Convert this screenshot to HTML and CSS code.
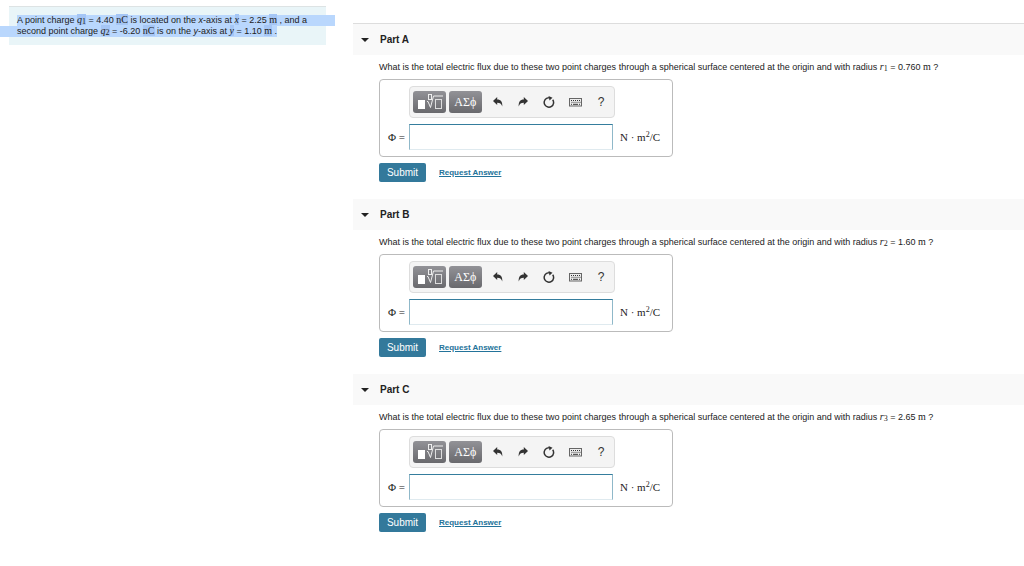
FILE: index.html
```
<!DOCTYPE html>
<html lang="en">
<head>
<meta charset="utf-8">
<title>Electric flux</title>
<link rel="stylesheet" href="styles.css">
</head>
<body>
<svg class="sprite" aria-hidden="true">
  <symbol id="template" viewBox="0 0 27 18">
    <rect x="2" y="7" width="7" height="9" fill="#fff"/>
    <rect x="12.500" y="1.500" width="3" height="5" fill="none" stroke="#eee"/>
    <path d="M11 8.500h1l2.500 6 3-11.500H27" fill="none" stroke="#eee"/>
    <rect x="19.500" y="6.500" width="6" height="9" fill="none" stroke="#ddd"/>
  </symbol>
  <symbol id="undo" viewBox="0 0 10 10"><path d="M0 4l4.200-4v2.400C8 2.400 9.500 4.500 9.300 9.500 8.300 6.800 7 5.800 4.200 5.800V8z" fill="#333"/></symbol>
  <symbol id="redo" viewBox="0 0 10 10"><path d="M10 4L5.800 0v2.400C2 2.400.5 4.500.7 9.500 1.700 6.800 3 5.800 5.800 5.800V8z" fill="#333"/></symbol>
  <symbol id="reset" viewBox="0 0 12 12"><path d="M9.700 3.700A4.700 4.700 0 1 1 3.500 2.400L6 1.600" fill="none" stroke="#333" stroke-width="1.500"/><path d="M5.500 0l4 1.700-3 2.800z" fill="#333"/></symbol>
  <symbol id="keyboard" viewBox="0 0 13 9"><rect x=".5" y=".5" width="12" height="7.500" fill="#eee" stroke="#666"/><path d="M2 2.500h9M2.500 4.300h9" stroke="#333" stroke-dasharray="1 1"/><path d="M2 6.300h1M4 6.300h5M10 6.300h1" stroke="#333"/></symbol>
</svg>
<div class="page">
  <aside class="side">
    <div class="statement">
      <div class="line line-first">A point charge <span class="math"><i>q</i><sub>1</sub></span> = 4.40 <span class="math">nC</span> is located on the <i>x</i>-axis at <span class="math"><i>x</i></span> = 2.25 <span class="math">m</span> , and a</div>
      <div class="line line-last">second point charge <span class="math"><i>q</i><sub>2</sub></span> = -6.20 <span class="math">nC</span> is on the <i>y</i>-axis at <span class="math"><i>y</i></span> = 1.10 <span class="math">m</span> .</div>
    </div>
  </aside>
  <main class="parts">
    <section class="part">
      <h2 class="part-head"><span class="caret"></span>Part A</h2>
      <form class="part-body">
        <p class="question">What is the total electric flux due to these two point charges through a spherical surface centered at the origin and with radius <span class="math"><i>r</i><sub>1</sub></span> = 0.760 <span class="math">m</span> ?</p>
        <div class="answer">
          <div class="toolbar">
            <button type="button" class="key" aria-label="Templates"><svg class="tpl"><use href="#template"/></svg></button>
            <button type="button" class="key">ΑΣϕ</button>
            <button type="button" class="tool" aria-label="Undo"><svg class="arrow"><use href="#undo"/></svg></button>
            <button type="button" class="tool" aria-label="Redo"><svg class="arrow"><use href="#redo"/></svg></button>
            <button type="button" class="tool" aria-label="Reset"><svg class="reset"><use href="#reset"/></svg></button>
            <button type="button" class="tool" aria-label="Keyboard"><svg class="kbd"><use href="#keyboard"/></svg></button>
            <button type="button" class="tool">?</button>
          </div>
          <label class="symbol" for="flux-a">Φ =</label>
          <input class="field" id="flux-a" type="text">
          <span class="unit">N · m<sup>2</sup>/C</span>
        </div>
        <div class="actions"><button type="button" class="submit">Submit</button><a class="request" href="#">Request Answer</a></div>
      </form>
    </section>
    <section class="part">
      <h2 class="part-head"><span class="caret"></span>Part B</h2>
      <form class="part-body">
        <p class="question">What is the total electric flux due to these two point charges through a spherical surface centered at the origin and with radius <span class="math"><i>r</i><sub>2</sub></span> = 1.60 <span class="math">m</span> ?</p>
        <div class="answer">
          <div class="toolbar">
            <button type="button" class="key" aria-label="Templates"><svg class="tpl"><use href="#template"/></svg></button>
            <button type="button" class="key">ΑΣϕ</button>
            <button type="button" class="tool" aria-label="Undo"><svg class="arrow"><use href="#undo"/></svg></button>
            <button type="button" class="tool" aria-label="Redo"><svg class="arrow"><use href="#redo"/></svg></button>
            <button type="button" class="tool" aria-label="Reset"><svg class="reset"><use href="#reset"/></svg></button>
            <button type="button" class="tool" aria-label="Keyboard"><svg class="kbd"><use href="#keyboard"/></svg></button>
            <button type="button" class="tool">?</button>
          </div>
          <label class="symbol" for="flux-b">Φ =</label>
          <input class="field" id="flux-b" type="text">
          <span class="unit">N · m<sup>2</sup>/C</span>
        </div>
        <div class="actions"><button type="button" class="submit">Submit</button><a class="request" href="#">Request Answer</a></div>
      </form>
    </section>
    <section class="part">
      <h2 class="part-head"><span class="caret"></span>Part C</h2>
      <form class="part-body">
        <p class="question">What is the total electric flux due to these two point charges through a spherical surface centered at the origin and with radius <span class="math"><i>r</i><sub>3</sub></span> = 2.65 <span class="math">m</span> ?</p>
        <div class="answer">
          <div class="toolbar">
            <button type="button" class="key" aria-label="Templates"><svg class="tpl"><use href="#template"/></svg></button>
            <button type="button" class="key">ΑΣϕ</button>
            <button type="button" class="tool" aria-label="Undo"><svg class="arrow"><use href="#undo"/></svg></button>
            <button type="button" class="tool" aria-label="Redo"><svg class="arrow"><use href="#redo"/></svg></button>
            <button type="button" class="tool" aria-label="Reset"><svg class="reset"><use href="#reset"/></svg></button>
            <button type="button" class="tool" aria-label="Keyboard"><svg class="kbd"><use href="#keyboard"/></svg></button>
            <button type="button" class="tool">?</button>
          </div>
          <label class="symbol" for="flux-c">Φ =</label>
          <input class="field" id="flux-c" type="text">
          <span class="unit">N · m<sup>2</sup>/C</span>
        </div>
        <div class="actions"><button type="button" class="submit">Submit</button><a class="request" href="#">Request Answer</a></div>
      </form>
    </section>
  </main>
</div>
</body>
</html>
```
FILE: styles.css
```
* { box-sizing: border-box; }
body {
  margin: 0;
  background: #fff;
  color: #222;
  font: 9px/12px "Liberation Sans", Arial, sans-serif;
}
.sprite { display: none; }
.page {
  display: grid;
  grid-template-columns: 335px minmax(0, 1fr);
  column-gap: 18px;
}
.side { padding: 6px 9px 0; }
.statement {
  padding: 8px 0 8px 8px;
  border-top: 1px solid #dde3e4;
  background: #e9f5f8;
}
.line { height: 11px; line-height: 10px; background: #b9d7fd; white-space: nowrap; }
.line-first { margin-right: -9px; }
.line-last { width: fit-content; margin-left: -17px; padding-left: 17px; }
.math {
  font-family: "Liberation Serif", "Times New Roman", serif;
  font-size: 10px;
  line-height: 1;
}
.line .math { background: #a5c6f5; }
sub, sup { font-size: 8px; line-height: 0; }
sub { vertical-align: -1px; }
sup { vertical-align: 4px; }
.parts { margin-top: 23px; border-top: 1px solid #ddd; }
.part-head {
  display: flex;
  align-items: center;
  gap: 11px;
  margin: 0;
  height: 31px;
  padding-left: 8px;
  background: #f9f9f9;
  font-size: 10px;
  font-weight: bold;
}
.caret {
  border: 4px solid transparent;
  border-top-color: #222;
  border-bottom: 0;
}
.part-body { padding: 6px 0 17px 26px; }
.question { margin: 0 0 6px; }
.answer {
  display: grid;
  grid-template-columns: 21px 211px auto;
  row-gap: 6px;
  align-items: center;
  width: fit-content;
  padding: 6px 12px 6px 8px;
  border: 1px solid #bbb;
  border-radius: 4px;
}
.toolbar {
  grid-column: 2;
  display: flex;
  align-items: center;
  width: 206px;
  height: 32px;
  padding-left: 3px;
  border: 1px solid #ddd;
  border-radius: 4px;
  background: #f4f4f4;
}
button { margin: 0; border: 0; padding: 0; font-family: inherit; }
.key {
  display: flex;
  align-items: center;
  justify-content: center;
  width: 33px;
  height: 22px;
  margin-right: 3px;
  border-radius: 3px;
  background: linear-gradient(#929297, #69696d);
  color: #fff;
  font: 12px/14px "Liberation Serif", "Times New Roman", serif;
}
.tool {
  display: flex;
  align-items: center;
  justify-content: center;
  width: 26px;
  height: 22px;
  background: none;
  color: #333;
  font-size: 12px;
}
.tpl { width: 27px; height: 18px; }
.arrow { width: 10px; height: 10px; }
.reset { width: 12px; height: 12px; }
.kbd { width: 13px; height: 9px; }
.symbol, .unit { font: 11px/14px "Liberation Serif", "Times New Roman", serif; }
.symbol { grid-column: 1; white-space: nowrap; }
.field {
  width: 204px;
  height: 26px;
  border: 1px solid #8fb8c9;
  border-top-color: #357d9d;
  border-bottom-color: #dfeaef;
  padding: 0 4px;
  font: inherit;
}
.actions { display: flex; align-items: center; gap: 13px; margin-top: 6px; }
.submit {
  width: 47px;
  height: 19px;
  border-radius: 2px;
  background: #33799b;
  color: #fff;
  font-size: 10px;
}
.request { color: #23739a; font-size: 8px; font-weight: bold; }
```
